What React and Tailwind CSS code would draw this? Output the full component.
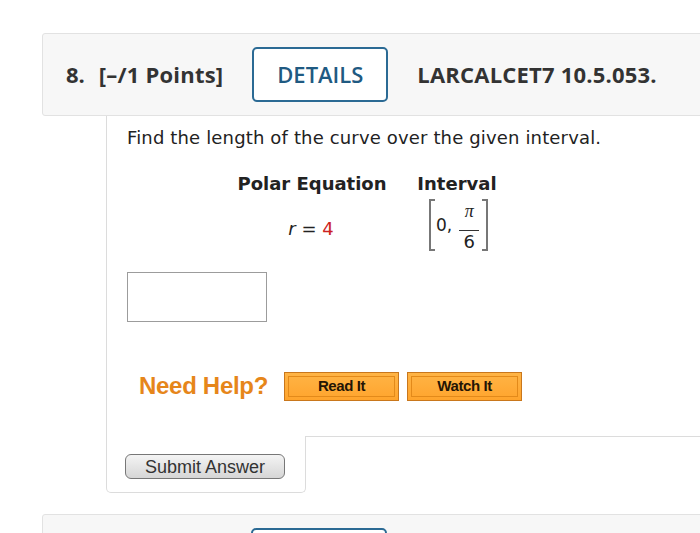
import React from 'react';

const App = () => {
  return (
    <div className="w-[700px] h-[533px] overflow-hidden bg-white pl-[42px] pt-[33px]">
      {/* Question header */}
      <div className="w-[680px] h-[83px] flex items-center bg-[#f7f7f7] border border-[#e2e2e2] rounded-[3px] pl-[23px] text-[#333] font-['Open_Sans',sans-serif]">
        <span className="text-[22px] font-bold">8.</span>
        <span className="ml-[14px] text-[22px] font-bold tracking-[0.2px]">[–/1 Points]</span>
        <button className="ml-[29px] w-[136px] h-[55px] border-2 border-[#2b6a94] rounded-[5px] bg-white text-[22px] font-semibold text-[#1f5a82]">
          DETAILS
        </button>
        <span className="ml-[29px] text-[22px] font-bold tracking-[0.2px]">LARCALCET7 10.5.053.</span>
      </div>

      {/* Question body */}
      <div className="ml-[64px] w-[600px] border-l border-[#dcdcdc] pl-[20px] pt-[12px] h-[320px] font-['DejaVu_Sans',Verdana,sans-serif] text-[#222]">
        <p className="text-[18px] leading-[20px] tracking-[0.15px]">Find the length of the curve over the given interval.</p>

        <div className="mt-[26px] flex">
          <div className="ml-[110px] w-[150px] text-center text-[18px] font-bold leading-[20px]">Polar Equation</div>
          <div className="ml-[28px] w-[84px] text-center text-[18px] font-bold leading-[20px]">Interval</div>
        </div>

        <div className="mt-[5px] flex items-center h-[52px]">
          <div className="ml-[154px] w-[60px] text-[18px] text-center mt-[6px]">
            <i>r</i> = <span className="text-[#cc2222]">4</span>
          </div>
          <div className="ml-[88px] flex items-stretch h-[52px]">
            <div className="w-[6px] border-l-2 border-t-2 border-b-2 border-[#777]" />
            <div className="flex pl-[1px] pr-[3px]">
              <span className="self-center text-[17px] leading-[20px]">0,</span>
              <div className="ml-[7px] pt-[2px] flex flex-col items-center">
                <span className="text-[18px] italic leading-[20px] font-['Liberation_Serif',serif]">π</span>
                <span className="mt-[9px] w-[20px] h-[1px] bg-[#333]" />
                <span className="mt-[2px] text-[18px] leading-[18px]">6</span>
              </div>
            </div>
            <div className="w-[6px] border-r-2 border-t-2 border-b-2 border-[#777]" />
          </div>
        </div>

        <input className="mt-[21px] block w-[140px] h-[50px] border border-[#9c9c9c] bg-white" />

        <div className="mt-[46px] flex items-center font-['Liberation_Sans',Arial,sans-serif]">
          <span className="ml-[12px] text-[24px] font-bold text-[#e6861a] tracking-[-0.3px]">Need Help?</span>
          <button className="ml-[16px] w-[115px] h-[29px] bg-gradient-to-b from-[#ffb445] to-[#ffa42c] border border-[#c9771c] p-[3px]">
            <span className="flex items-center justify-center h-full border border-[#e38a1a] text-[15px] font-bold text-[#241505] tracking-[-0.4px]">Read It</span>
          </button>
          <button className="ml-[8px] w-[115px] h-[29px] bg-gradient-to-b from-[#ffb445] to-[#ffa42c] border border-[#c9771c] p-[3px]">
            <span className="flex items-center justify-center h-full border border-[#e38a1a] text-[15px] font-bold text-[#241505] tracking-[-0.4px]">Watch It</span>
          </button>
        </div>
      </div>

      {/* Submit row */}
      <div className="ml-[64px] flex w-[620px]">
        <div className="w-[200px] h-[57px] border-l border-r border-b border-[#dcdcdc] rounded-b-[5px] pl-[18px] pt-[18px]">
          <button className="w-[160px] h-[25px] rounded-[6px] border border-[#777] bg-gradient-to-b from-[#f4f4f4] to-[#d6d6d6] text-[18px] leading-[22px] text-[#333] font-['Liberation_Sans',Arial,sans-serif]">
            Submit Answer
          </button>
        </div>
        <div className="flex-1 border-t border-[#dcdcdc]" />
      </div>

      {/* Next question header (cut off) */}
      <div className="mt-[21px] w-[680px] h-[83px] bg-[#f7f7f7] border border-[#e2e2e2] rounded-[3px] pt-[13px]">
        <div className="ml-[208px] w-[136px] h-[55px] border-2 border-[#2b6a94] rounded-[5px] bg-white" />
      </div>
    </div>
  );
};

export default App;
